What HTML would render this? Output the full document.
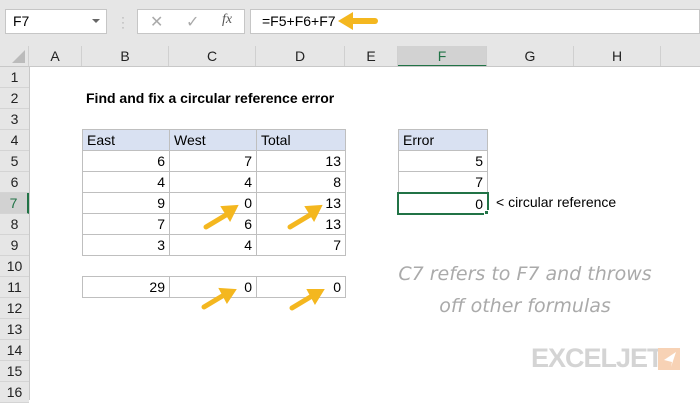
<!DOCTYPE html>
<html><head><style>
*{margin:0;padding:0;box-sizing:border-box}
body{width:700px;height:400px;overflow:hidden;background:#fff;font-family:"Liberation Sans",Calibri,sans-serif;font-size:13px;color:#000;position:relative}
.a{position:absolute}
.ch{position:absolute;top:46px;height:21px;background:#e6e6e6;border-right:1px solid #d0d0d0;text-align:center;line-height:21px;font-size:14px;color:#222}
.rh{position:absolute;left:0;width:29px;height:21px;background:#e6e6e6;border-bottom:1px solid #d4d4d4;text-align:center;line-height:21px;font-size:14px;color:#222}
.c{position:absolute;height:22px;border:1px solid #bfbfbf;line-height:20px;padding:0 4px;font-size:14px}
.r{text-align:right}
.h{background:#d9e1f2}
</style></head><body>
<div class="a" style="left:0;top:0;width:700px;height:46px;background:#e6e6e6"></div>
<div class="a" style="left:5px;top:9px;width:102px;height:25px;background:#fff;border:1px solid #c6c6c6;padding-left:7px;line-height:23px;font-size:14px">F7</div>
<div class="a" style="left:92px;top:19px;width:0;height:0;border-left:4px solid transparent;border-right:4px solid transparent;border-top:4px solid #666"></div>
<div class="a" style="left:121px;top:15px;color:#aaa;font-size:12px;line-height:5px">·<br>·<br>·</div>
<div class="a" style="left:137px;top:9px;width:108px;height:25px;background:#fff;border:1px solid #c6c6c6"></div>
<div class="a" style="left:150px;top:12px;color:#aaa;font-size:16px">✕</div>
<div class="a" style="left:186px;top:12px;color:#aaa;font-size:16px">✓</div>
<div class="a" style="left:222px;top:12px;color:#555;font-size:14px;font-style:italic;font-family:'Liberation Serif',serif">fx</div>
<div class="a" style="left:250px;top:9px;width:450px;height:25px;background:#fff;border:1px solid #c6c6c6;padding-left:11px;line-height:23px;font-size:14px">=F5+F6+F7</div>
<svg class="a" style="left:335px;top:10px" width="45" height="22"><path d="M40 11 H14" stroke="#f4b71f" stroke-width="6" stroke-linecap="round"/><path d="M3 11 L18 2 L18 20Z" fill="#f4b71f"/></svg>
<div class="ch" style="left:0;width:29px"></div>
<div class="a" style="left:12px;top:50px;width:0;height:0;border-left:13px solid transparent;border-bottom:13px solid #bbb"></div>
<div class="ch" style="left:29px;width:53px">A</div>
<div class="ch" style="left:82px;width:87px">B</div>
<div class="ch" style="left:169px;width:87px">C</div>
<div class="ch" style="left:256px;width:89px">D</div>
<div class="ch" style="left:345px;width:53px">E</div>
<div class="ch" style="left:398px;width:89px;background:#d2d2d2;border-bottom:2px solid #217346;color:#217346">F</div>
<div class="ch" style="left:487px;width:87px">G</div>
<div class="ch" style="left:574px;width:87px">H</div>
<div class="ch" style="left:661px;width:39px;border-right:none"></div>
<div class="a" style="left:0;top:66px;width:700px;height:1px;background:#c8c8c8"></div>
<div class="rh" style="top:67px">1</div><div class="rh" style="top:88px">2</div><div class="rh" style="top:109px">3</div><div class="rh" style="top:130px">4</div><div class="rh" style="top:151px">5</div><div class="rh" style="top:172px">6</div>
<div class="rh" style="top:193px;background:#d2d2d2;color:#217346;border-right:2px solid #217346">7</div>
<div class="rh" style="top:214px">8</div><div class="rh" style="top:235px">9</div><div class="rh" style="top:256px">10</div><div class="rh" style="top:277px">11</div><div class="rh" style="top:298px">12</div><div class="rh" style="top:319px">13</div><div class="rh" style="top:340px">14</div><div class="rh" style="top:361px">15</div><div class="rh" style="top:382px">16</div>
<div class="a" style="left:29px;top:67px;width:1px;height:333px;background:#c8c8c8"></div>
<div class="a" style="left:86px;top:90px;font-weight:bold;font-size:14px">Find and fix a circular reference error</div>
<div class="c h" style="left:82px;top:129px;width:88px">East</div>
<div class="c h" style="left:169px;top:129px;width:88px">West</div>
<div class="c h" style="left:256px;top:129px;width:90px">Total</div>
<div class="c r" style="left:82px;top:150px;width:88px">6</div><div class="c r" style="left:169px;top:150px;width:88px">7</div><div class="c r" style="left:256px;top:150px;width:90px">13</div>
<div class="c r" style="left:82px;top:171px;width:88px">4</div><div class="c r" style="left:169px;top:171px;width:88px">4</div><div class="c r" style="left:256px;top:171px;width:90px">8</div>
<div class="c r" style="left:82px;top:192px;width:88px">9</div><div class="c r" style="left:169px;top:192px;width:88px">0</div><div class="c r" style="left:256px;top:192px;width:90px">13</div>
<div class="c r" style="left:82px;top:213px;width:88px">7</div><div class="c r" style="left:169px;top:213px;width:88px">6</div><div class="c r" style="left:256px;top:213px;width:90px">13</div>
<div class="c r" style="left:82px;top:234px;width:88px">3</div><div class="c r" style="left:169px;top:234px;width:88px">4</div><div class="c r" style="left:256px;top:234px;width:90px">7</div>
<div class="c r" style="left:82px;top:276px;width:88px">29</div><div class="c r" style="left:169px;top:276px;width:88px">0</div><div class="c r" style="left:256px;top:276px;width:90px">0</div>
<div class="c h" style="left:398px;top:129px;width:90px">Error</div>
<div class="c r" style="left:398px;top:150px;width:90px">5</div>
<div class="c r" style="left:398px;top:171px;width:90px">7</div>
<div class="c r" style="left:397px;top:192px;width:92px;height:23px;border:2px solid #217346">0</div>
<div class="a" style="left:484px;top:210px;width:5px;height:5px;background:#217346;border:1px solid #fff"></div>
<div class="a" style="left:496px;top:194px;font-size:14px">&lt; circular reference</div>
<svg class="a" style="left:0;top:0" width="700" height="400">
<g stroke="#f4b71f" stroke-width="5" stroke-linecap="round" fill="#f4b71f">
<path d="M206 227 L226 215"/><path d="M237 206 L222 207 L230 220Z" stroke-width="2"/>
<path d="M290 227 L310 215"/><path d="M321 206 L306 207 L314 220Z" stroke-width="2"/>
<path d="M204 307 L224 295"/><path d="M235 290 L220 289 L227 302Z" stroke-width="2"/>
<path d="M292 308 L312 296"/><path d="M323 290 L308 290 L315 303Z" stroke-width="2"/>
</g></svg>
<div class="a" style="left:380px;top:258px;width:290px;text-align:center;color:#aaa;font-size:19px;font-style:italic;font-family:'DejaVu Sans',sans-serif;line-height:32px;letter-spacing:0px">C7 refers to F7 and throws<br>off other formulas</div>
<div class="a" style="left:531px;top:343px;color:#d4d4d4;font-weight:bold;font-size:27px;letter-spacing:-1px">EXCELJET</div>
<div class="a" style="left:658px;top:348px;width:22px;height:22px;background:#f7d2b5"></div>
<svg class="a" style="left:658px;top:348px" width="22" height="22"><path d="M18 4 L6 12 L14 14 L13 19Z" fill="#fff"/></svg>
</body></html>
